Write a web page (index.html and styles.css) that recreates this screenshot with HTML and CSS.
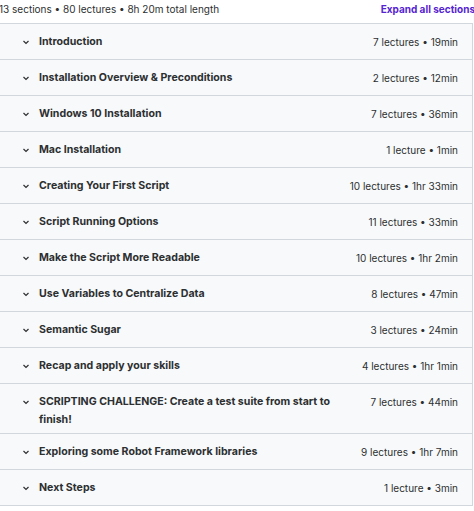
FILE: index.html
```html
<!DOCTYPE html>
<html>
<head>
<meta charset="utf-8">
<link rel="stylesheet" href="styles.css">
</head>
<body>
<div class="curriculum">
  <div class="summary">
    <span class="stats">13 sections • 80 lectures • 8h 20m total length</span>
    <span class="expand">Expand all sections</span>
  </div>
  <div class="sections">
    <div class="row"><svg class="chev" viewBox="0 0 10 10"><path d="M2.5 4 L5 6.5 L7.5 4"/></svg><span class="title">Introduction</span><span class="meta">7 lectures • 19min</span></div>
    <div class="row"><svg class="chev" viewBox="0 0 10 10"><path d="M2.5 4 L5 6.5 L7.5 4"/></svg><span class="title">Installation Overview &amp; Preconditions</span><span class="meta">2 lectures • 12min</span></div>
    <div class="row"><svg class="chev" viewBox="0 0 10 10"><path d="M2.5 4 L5 6.5 L7.5 4"/></svg><span class="title">Windows 10 Installation</span><span class="meta">7 lectures • 36min</span></div>
    <div class="row"><svg class="chev" viewBox="0 0 10 10"><path d="M2.5 4 L5 6.5 L7.5 4"/></svg><span class="title">Mac Installation</span><span class="meta">1 lecture • 1min</span></div>
    <div class="row"><svg class="chev" viewBox="0 0 10 10"><path d="M2.5 4 L5 6.5 L7.5 4"/></svg><span class="title">Creating Your First Script</span><span class="meta">10 lectures • 1hr 33min</span></div>
    <div class="row"><svg class="chev" viewBox="0 0 10 10"><path d="M2.5 4 L5 6.5 L7.5 4"/></svg><span class="title">Script Running Options</span><span class="meta">11 lectures • 33min</span></div>
    <div class="row"><svg class="chev" viewBox="0 0 10 10"><path d="M2.5 4 L5 6.5 L7.5 4"/></svg><span class="title">Make the Script More Readable</span><span class="meta">10 lectures • 1hr 2min</span></div>
    <div class="row"><svg class="chev" viewBox="0 0 10 10"><path d="M2.5 4 L5 6.5 L7.5 4"/></svg><span class="title">Use Variables to Centralize Data</span><span class="meta">8 lectures • 47min</span></div>
    <div class="row"><svg class="chev" viewBox="0 0 10 10"><path d="M2.5 4 L5 6.5 L7.5 4"/></svg><span class="title">Semantic Sugar</span><span class="meta">3 lectures • 24min</span></div>
    <div class="row"><svg class="chev" viewBox="0 0 10 10"><path d="M2.5 4 L5 6.5 L7.5 4"/></svg><span class="title">Recap and apply your skills</span><span class="meta">4 lectures • 1hr 1min</span></div>
    <div class="row tall"><svg class="chev" viewBox="0 0 10 10"><path d="M2.5 4 L5 6.5 L7.5 4"/></svg><span class="title">SCRIPTING CHALLENGE: Create a test suite from start to finish!</span><span class="meta">7 lectures • 44min</span></div>
    <div class="row"><svg class="chev" viewBox="0 0 10 10"><path d="M2.5 4 L5 6.5 L7.5 4"/></svg><span class="title">Exploring some Robot Framework libraries</span><span class="meta">9 lectures • 1hr 7min</span></div>
    <div class="row"><svg class="chev" viewBox="0 0 10 10"><path d="M2.5 4 L5 6.5 L7.5 4"/></svg><span class="title">Next Steps</span><span class="meta">1 lecture • 3min</span></div>
  </div>
</div>
</body>
</html>
```

FILE: styles.css
```css
html, body {
  margin: 0;
  padding: 0;
  background: #ffffff;
}
body {
  font-family: Inter, "Noto Sans", "Liberation Sans", sans-serif;
  color: #2d2f31;
}
.curriculum {
  width: 474px;
  margin-left: -1px;
}
.summary {
  display: flex;
  justify-content: space-between;
  align-items: center;
  height: 23px;
  font-size: 10px;
}
.stats {
  color: #2d2f31;
  margin-top: -5px;
}
.expand {
  color: #5624d0;
  font-weight: 700;
  font-size: 10px;
  margin-top: -5px;
  white-space: nowrap;
  margin-right: -2px;
}
.sections {
  border: 1px solid #d1d7dc;
  border-bottom: none;
  width: 472px;
}
.row {
  display: flex;
  align-items: center;
  min-height: 36px;
  box-sizing: border-box;
  background: #f7f9fa;
  border-bottom: 1px solid #d1d7dc;
  padding: 0 14px 0 21px;
}
.row.tall {
  align-items: flex-start;
  padding-top: 9px;
  padding-bottom: 4px;
}
.row.tall .chev {
  margin-top: 4px;
}
.chev {
  width: 10px;
  height: 10px;
  flex: none;
  fill: none;
  stroke: #2d2f31;
  stroke-width: 1.2;
  margin-right: 8px;
}
.title {
  flex: 1;
  font-weight: 700;
  font-size: 10.6px;
  line-height: 18px;
  padding-right: 24px;
}
.meta {
  font-size: 10px;
  white-space: nowrap;
  line-height: 18px;
}
```
